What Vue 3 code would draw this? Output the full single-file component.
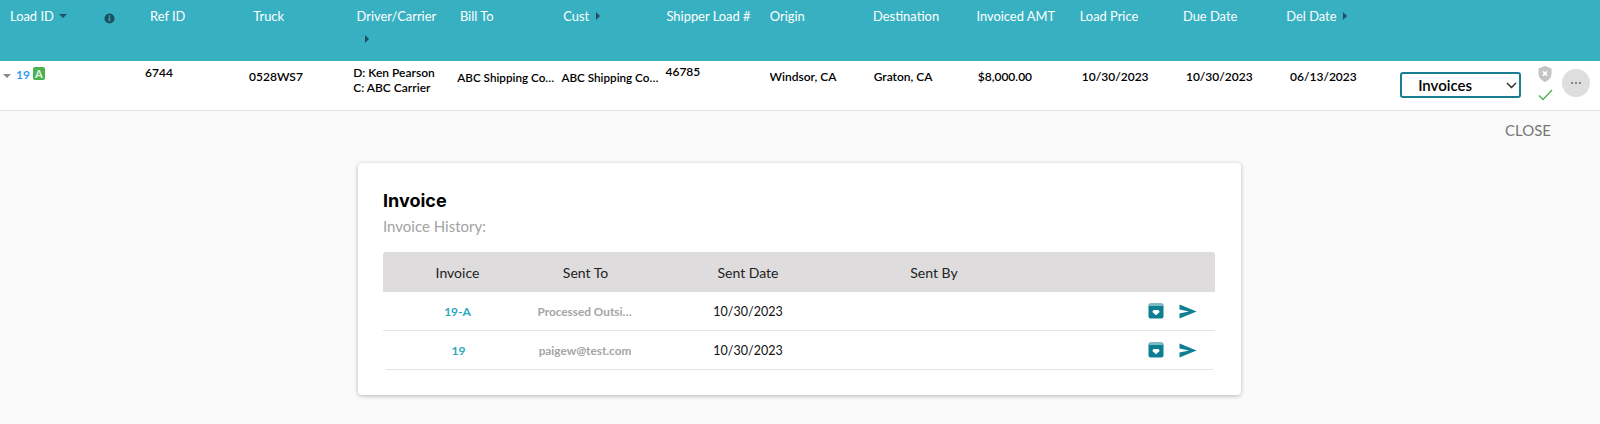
<script setup>
const heads = [
  { t: 'Load ID', caret: 'down' }, { t: '', info: true }, { t: 'Ref ID' }, { t: 'Truck' },
  { t: 'Driver/Carrier', caret: 'right', wrap: true }, { t: 'Bill To' }, { t: 'Cust', caret: 'right' },
  { t: 'Shipper Load #' }, { t: 'Origin' }, { t: 'Destination' }, { t: 'Invoiced AMT' },
  { t: 'Load Price' }, { t: 'Due Date' }, { t: 'Del Date', caret: 'right' }
]
const cells = [
  { t: '6744', top: true }, { t: '0528WS7' }, { lines: ['D: Ken Pearson', 'C: ABC Carrier'] },
  { t: 'ABC Shipping Company', long: true }, { t: 'ABC Shipping Company', long: true }, { t: '46785', top: true, high: true },
  { t: 'Windsor, CA' }, { t: 'Graton, CA' }, { t: '$8,000.00' },
  { t: '10/30/2023' }, { t: '10/30/2023' }, { t: '06/13/2023' }
]
const invoices = [
  { id: '19-A', to: 'Processed Outside System', date: '10/30/2023' },
  { id: '19', to: 'paigew@test.com', date: '10/30/2023' }
]
</script>

<template>
  <div class="page">
    <header class="thead">
      <div v-for="(h, i) in heads" :key="i" class="th" :class="{ wrap: h.wrap }">
        <svg v-if="h.info" class="info" viewBox="0 0 12 12">
          <circle cx="6" cy="6" r="5.5" fill="#1d4f5f" />
          <rect x="5.1" y="5" width="1.8" height="4" fill="#37b1c2" />
          <rect x="5.1" y="2.6" width="1.8" height="1.6" fill="#37b1c2" />
        </svg>
        <span v-else>{{ h.t }}</span>
        <i v-if="h.caret === 'down'" class="caret-down"></i>
        <i v-if="h.caret === 'right'" class="caret-right"></i>
      </div>
    </header>

    <section class="row">
      <div class="idcell">
        <i class="caret-gray"></i>
        <a class="idlink">19</a>
        <b class="badge">A</b>
      </div>
      <div v-for="(c, i) in cells" :key="i" class="td" :class="{ top: c.top, two: c.lines, high: c.high, long: c.long }">
        <template v-if="c.lines"><div v-for="l in c.lines" :key="l">{{ l }}</div></template>
        <div v-else class="ellipsis">{{ c.t }}</div>
      </div>
      <div class="actions">
        <div class="select">
          <span>Invoices</span>
          <svg width="11" height="7" viewBox="0 0 11 7"><path d="M1 1l4.500 4.500L10 1" fill="none" stroke="#222" stroke-width="1.3" /></svg>
        </div>
        <div class="status">
          <svg width="14" height="16" viewBox="0 0 14 16">
            <path d="M7 0l6.500 2.400v5c0 3.900-2.700 6.800-6.500 8.600C3.200 14.200.5 11.300.5 7.400v-5z" fill="#c4c4c4" />
            <path d="M4.900 5.400l4.200 4.200M9.100 5.400L4.900 9.600" stroke="#fff" stroke-width="1.600" />
          </svg>
          <svg width="15" height="12" viewBox="0 0 15 12"><path d="M1 6.500l4 4L14 1" fill="none" stroke="#4caf50" stroke-width="1.300" /></svg>
        </div>
        <div class="more"><i></i><i></i><i></i></div>
      </div>
    </section>

    <div class="closebar"><span>CLOSE</span></div>

    <section class="card">
      <h2>Invoice</h2>
      <p>Invoice History:</p>
      <div class="grid ghead">
        <div>Invoice</div><div>Sent To</div><div>Sent Date</div><div>Sent By</div><div></div>
      </div>
      <div v-for="(r, i) in invoices" :key="r.id" class="grid grow" :class="{ inset: i === 1 }">
        <div class="inv">{{ r.id }}</div>
        <div class="to"><span>{{ r.to }}</span></div>
        <div class="date">{{ r.date }}</div>
        <div></div>
        <div class="icons">
          <svg width="16" height="16" viewBox="0 0 16 16">
            <rect x="0.500" y="0.500" width="15" height="15" rx="2" fill="#0e7f93" />
            <path d="M0.500 3V2.500a2 2 0 0 1 2-2h11a2 2 0 0 1 2 2V3z" fill="#7fb9c4" />
            <path d="M5.200 7h5.600v1.600h1.400L8 12.200 3.800 8.600h1.400z" fill="#fff" />
          </svg>
          <svg width="18" height="15" viewBox="0 0 18 15">
            <path d="M0.500 0.500L17.500 7.500 0.500 14.500V9.500L10 7.500 0.500 5.500z" fill="#0e7f93" />
          </svg>
        </div>
      </div>
    </section>
  </div>
</template>

<style scoped>
.page {
  height: 424px;
  overflow: hidden;
  background: #fafafa;
  font-family: Lato, "Liberation Sans", sans-serif;
  color: #000;
}
.thead {
  height: 61px;
  box-sizing: border-box;
  padding-left: 10px;
  background: #37b1c2;
  display: grid;
  grid-template-columns: 93px 47px repeat(12, 103.300px);
}
.th {
  color: #fff;
  font-size: 12.900px;
  line-height: 16px;
  padding-top: 8px;
  white-space: nowrap;
  display: flex;
  align-items: center;
  align-self: start;
  gap: 5px;
}
.th.wrap { flex-wrap: wrap; width: 90px; row-gap: 11px; }
.th.wrap i { margin-left: 8px; }
.info { width: 11px; height: 11px; margin: 5px 0 0 1px; }
.caret-down {
  width: 0; height: 0;
  border: 4px solid transparent;
  border-top: 4px solid #1d5566;
  border-bottom: 0;
}
.caret-right {
  width: 0; height: 0;
  border: 4px solid transparent;
  border-left: 4px solid #1d4f5f;
  border-right: 0;
  margin-left: 2px;
}
.row {
  height: 50px;
  box-sizing: border-box;
  background: #fff;
  border-top: 1px solid #fff;
  border-bottom: 1px solid #e0e0e0;
  display: grid;
  grid-template-columns: 145px repeat(12, 104.100px) 1fr;
  font-size: 12px;
  font-weight: 600;
  line-height: 16px;
}
.idcell {
  display: flex;
  align-items: flex-start;
  padding: 5px 0 0 3px;
}
.caret-gray {
  width: 0; height: 0;
  border: 4px solid transparent;
  border-top: 4px solid #888;
  border-bottom: 0;
  margin: 7px 5px 0 0;
}
.idlink { color: #2196f3; }
.badge {
  width: 12px; height: 13px;
  margin-left: 3px;
  border-radius: 2px;
  background: #4caf50;
  color: #d9f2da;
  font-size: 11px;
  line-height: 13px;
  text-align: center;
}
.td { padding-top: 7px; min-width: 0; }
.td.top { padding-top: 3px; }
.td.high { padding-top: 2px; }
.td.two { padding-top: 3px; line-height: 15px; }
.td.long { font-size: 11.700px; }
.ellipsis {
  max-width: 98px;
  overflow: hidden;
  text-overflow: ellipsis;
  white-space: nowrap;
}
.actions {
  display: flex;
  align-items: flex-start;
  padding-left: 6px;
  min-width: 0;
}
.select {
  flex: none;
  width: 121px; height: 26px;
  margin-top: 10px;
  box-sizing: border-box;
  border: 2px solid #1a7d91;
  border-radius: 3px;
  background: #fff;
  display: flex;
  align-items: center;
  justify-content: space-between;
  padding: 0 2px 0 16px;
  font-size: 15px;
  font-weight: 600;
}
.status {
  flex: none;
  width: 14px;
  margin: 4px 0 0 17px;
  display: flex;
  flex-direction: column;
  align-items: center;
  gap: 7px;
}
.status svg { flex: none; }
.more {
  flex: none;
  width: 28px; height: 28px;
  margin: 7px 0 0 10px;
  border-radius: 50%;
  background: #dedede;
  display: flex;
  align-items: center;
  justify-content: center;
  gap: 1.500px;
}
.more i { width: 2.500px; height: 2.500px; border-radius: 50%; background: #666; }
.closebar {
  height: 52px;
  box-sizing: border-box;
  padding: 10px 49px 0 0;
  text-align: right;
  color: #777;
  font-size: 15px;
  line-height: 18px;
}
.card {
  width: 883px;
  height: 232px;
  margin-left: 358px;
  box-sizing: border-box;
  padding: 26px 25px 0;
  background: #fff;
  border-radius: 4px;
  box-shadow: 0 1px 4px rgba(0, 0, 0, 0.28);
}
h2 {
  margin: 0;
  font: 700 18px/24px Inter, sans-serif;
}
p {
  margin: 3px 0 0;
  color: #a3a3a3;
  font-size: 15px;
  line-height: 20px;
}
.grid {
  display: grid;
  grid-template-columns: 149px 107px 218px 154px 1fr;
  align-items: center;
  text-align: center;
}
.ghead {
  height: 40px;
  margin-top: 16px;
  width: 832px;
  background: #dedcdd;
  border-radius: 3px 3px 0 0;
  font-size: 14px;
  color: #222;
}
.grow {
  height: 39px;
  width: 832px;
  box-sizing: border-box;
  border-bottom: 1px solid #e4e4e4;
  font-size: 12.500px;
}
.grow.inset { width: 827px; margin-left: 3px; grid-template-columns: 145px 108px 218px 154px 1fr; }
.inv { color: #2aa9bf; font-size: 12px; font-weight: 700; }
.to {
  color: #a5a5a5;
  font-size: 11.800px;
  font-weight: 700;
  display: flex;
  justify-content: center;
  min-width: 0;
}
.to span {
  max-width: 96px;
  overflow: hidden;
  text-overflow: ellipsis;
  white-space: nowrap;
}
.date { color: #111; }
.icons {
  display: flex;
  justify-content: flex-end;
  align-items: center;
  gap: 15px;
  padding-right: 18px;
}
.grow.inset .icons { padding-right: 16px; }
</style>
